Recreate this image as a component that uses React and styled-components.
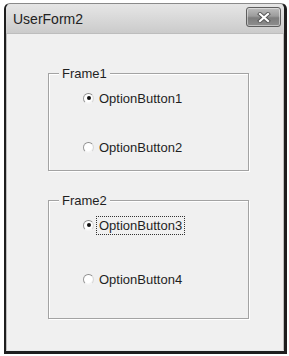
import React from "react";
import styled, { createGlobalStyle } from "styled-components";

const Global = createGlobalStyle`
  html, body {
    margin: 0;
    padding: 0;
    background: #ffffff;
    width: 289px;
    height: 356px;
    overflow: hidden;
  }
`;

const Window = styled.div`
  margin: 3px 0 0 4px;
  width: 278px;
  height: 347px;
  display: flex;
  flex-direction: column;
  background: #cfcfcf;
  border-left: 2px solid #1e1e1e;
  border-right: 3px solid #1e1e1e;
  border-bottom: 3px solid #1e1e1e;
  border-top: 1px solid #8a8a8a;
  border-radius: 6px 6px 0 0;
  font-family: "Liberation Sans", Arial, sans-serif;
  color: #1f1f1f;
`;

const TitleBar = styled.div`
  height: 29px;
  flex-shrink: 0;
  display: flex;
  align-items: center;
  justify-content: space-between;
  padding: 0 3px 0 7px;
  background: linear-gradient(#e6e6e6, #cbcbcb);
  border-radius: 5px 5px 0 0;
`;

const Title = styled.span`
  font-size: 14px;
  color: #222;
  margin-top: 1px;
`;

const CloseButton = styled.div`
  width: 33px;
  height: 18px;
  margin-top: -3px;
  border: 1px solid #5e5e5e;
  border-radius: 3px;
  background: linear-gradient(#bdbdbd 0%, #9c9c9c 45%, #7d7d7d 55%, #8e8e8e 100%);
  box-shadow: inset 0 0 0 1px rgba(255, 255, 255, 0.45);
  display: flex;
  align-items: center;
  justify-content: center;
`;

const Body = styled.div`
  flex: 1;
  background: #f0f0f0;
  border: 1px solid #bdbdbd;
  border-bottom-color: #e8e8e8;
  padding: 39px 0 0 41px;
  display: flex;
  flex-direction: column;
  gap: 29px;
`;

const Frame = styled.div`
  position: relative;
  width: 201px;
  height: ${(p) => p.$h}px;
  border: 1px solid #a3a3a3;
  box-shadow: inset 1px 1px 0 #ffffff, 1px 1px 0 #ffffff;
  padding: 14px 0 0 34px;
  box-sizing: border-box;
  display: flex;
  flex-direction: column;
  gap: ${(p) => p.$gap}px;
`;

const Legend = styled.span`
  position: absolute;
  top: -8px;
  left: 10px;
  padding: 0 3px;
  background: #f0f0f0;
  font-size: 13px;
  line-height: 15px;
`;

const Option = styled.div`
  height: 20px;
  display: flex;
  align-items: center;
  gap: 2px;
  font-size: 13px;
`;

const Radio = styled.span`
  width: 9px;
  height: 9px;
  border-radius: 50%;
  border: 1px solid;
  border-color: #8c8c8c #d8d8d8 #f4f4f4 #9a9a9a;
  background: radial-gradient(circle at 40% 40%, #ffffff 55%, #e2e2e2 100%);
  display: flex;
  align-items: center;
  justify-content: center;
  flex-shrink: 0;

  &::after {
    content: "";
    width: 4px;
    height: 4px;
    border-radius: 50%;
    background: ${(p) => (p.$checked ? "#111" : "transparent")};
  }
`;

const Label = styled.span`
  padding: 1px 2px;
  border: 1px ${(p) => (p.$focus ? "dotted #333" : "solid transparent")};
  line-height: 15px;
`;

export default function App() {
  return (
    <>
      <Global />
      <Window>
        <TitleBar>
          <Title>UserForm2</Title>
          <CloseButton>
            <svg width="14" height="11" viewBox="0 0 14 11">
              <path d="M3 2 L11 9 M11 2 L3 9" stroke="#555" strokeWidth="4" strokeLinecap="square" />
              <path d="M3 2 L11 9 M11 2 L3 9" stroke="#fff" strokeWidth="2.2" strokeLinecap="square" />
            </svg>
          </CloseButton>
        </TitleBar>
        <Body>
          <Frame $h={98} $gap={29}>
            <Legend>Frame1</Legend>
            <Option>
              <Radio $checked />
              <Label>OptionButton1</Label>
            </Option>
            <Option>
              <Radio />
              <Label>OptionButton2</Label>
            </Option>
          </Frame>
          <Frame $h={119} $gap={34}>
            <Legend>Frame2</Legend>
            <Option>
              <Radio $checked />
              <Label $focus>OptionButton3</Label>
            </Option>
            <Option>
              <Radio />
              <Label>OptionButton4</Label>
            </Option>
          </Frame>
        </Body>
      </Window>
    </>
  );
}
